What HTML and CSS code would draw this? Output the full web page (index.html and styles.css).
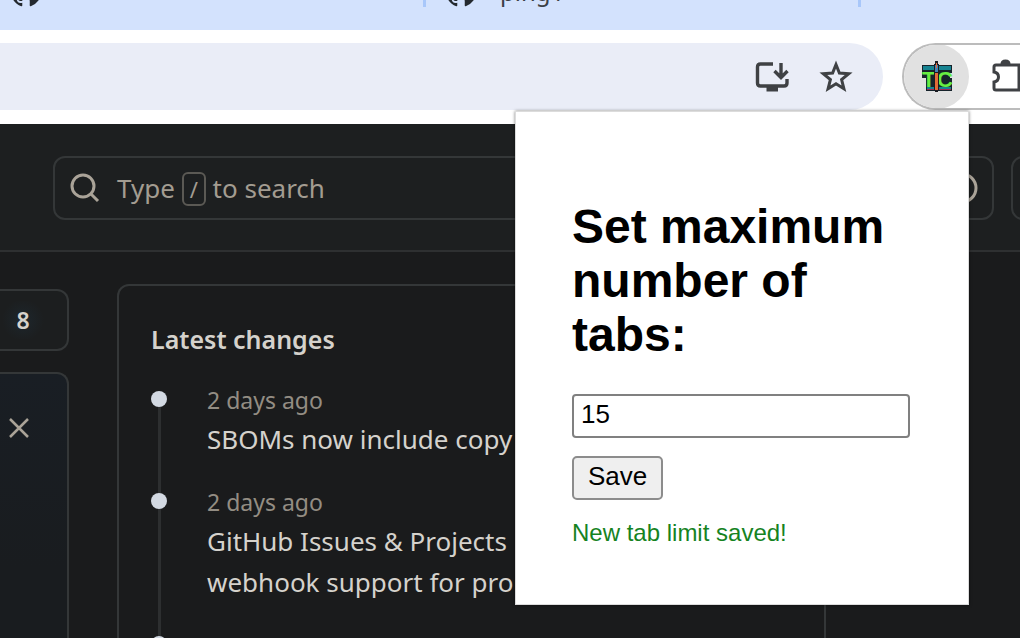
FILE: index.html
```html
<!DOCTYPE html>
<html lang="en">
<head>
    <meta charset="UTF-8">
    <meta name="viewport" content="width=device-width, initial-scale=1.0">
    <title>Tab limit</title>
    <link rel="stylesheet" href="styles.css">
</head>
<body>
    <svg hidden>
        <symbol id="github" viewBox="0 0 16 16">
            <path d="M8 0C3.58 0 0 3.58 0 8c0 3.54 2.29 6.53 5.47 7.59.4.07.55-.17.55-.38 0-.19-.01-.82-.01-1.49-2.01.37-2.53-.49-2.69-.94-.09-.23-.48-.94-.82-1.13-.28-.15-.68-.52-.01-.53.63-.01 1.08.58 1.23.82.72 1.21 1.87.87 2.33.66.07-.52.28-.87.51-1.07-1.78-.2-3.64-.89-3.64-3.95 0-.87.31-1.59.82-2.15-.08-.2-.36-1.02.08-2.12 0 0 .67-.21 2.2.82a7.6 7.6 0 0 1 4 0c1.53-1.04 2.2-.82 2.2-.82.44 1.1.16 1.92.08 2.12.51.56.82 1.27.82 2.15 0 3.07-1.87 3.75-3.65 3.95.29.25.54.73.54 1.48 0 1.07-.01 1.93-.01 2.2 0 .21.15.46.55.38A8 8 0 0 0 16 8c0-4.42-3.58-8-8-8z"/>
        </symbol>
    </svg>

    <div class="tab-strip">
        <div class="tab"><svg class="tab-icon"><use href="#github"/></svg></div>
        <div class="tab"><svg class="tab-icon"><use href="#github"/></svg><span class="tab-title">ping /</span></div>
        <div class="tab"></div>
    </div>

    <div class="toolbar">
        <div class="address-bar">
            <button class="icon-button" aria-label="Install app">
                <svg width="36" height="36" viewBox="0 0 36 36" fill="none" stroke="#3f4144" stroke-width="3.4">
                    <path d="M19 5H6.500Q3.500 5 3.500 8V24Q3.500 27 6.500 27H30Q33 27 33 24V20"/>
                    <path d="M27 4V18M20.500 12L27 18.500L33.500 12"/>
                    <path d="M12.500 30H24" stroke-width="5"/>
                </svg>
            </button>
            <button class="icon-button" aria-label="Bookmark this tab">
                <svg width="36" height="36" viewBox="0 0 36 36" fill="none" stroke="#3f4144" stroke-width="3">
                    <path d="M18 5.500L21.400 14.100L30.700 14.700L23.600 20.600L25.900 29.700L18 24.700L10.100 29.700L12.400 20.600L5.300 14.700L14.600 14.100Z"/>
                </svg>
            </button>
        </div>
        <div class="extensions">
            <button class="extension-active" aria-label="Tab limit extension">
                <svg width="32" height="32" viewBox="0 0 32 32">
                    <path fill="#16232b" d="M1 4H31V12H29V17H31V30H5V17H1Z"/>
                    <path fill="#168391" d="M2 5H30V9H2Z"/>
                    <path fill="#a32855" d="M6 28H30V29H6Z"/>
                    <path fill="#168391" d="M6 26H30V28H6Z"/>
                    <g class="extension-letters">
                        <text x="1" y="26">T</text>
                        <text x="16" y="26">C</text>
                    </g>
                    <path fill="#1c1c22" d="M13 3H14V0H17V3H18V29H17V31H14V29H13Z"/>
                    <path fill="#4382b5" d="M14 4H17V11H14Z"/>
                    <path fill="#e36b38" d="M14 12H17V29H14ZM15 2H16V7H15Z"/>
                </svg>
            </button>
            <button class="icon-button" aria-label="Extensions">
                <svg width="36" height="36" viewBox="0 0 36 36" fill="none" stroke="#3f4144" stroke-width="3">
                    <path d="M7 6H30V31H7Q5 31 5 29V23C11 22 11 14 5 13V8Q5 6 7 6Z"/>
                    <path d="M13 5C13 1 20 1 20 5Z" fill="#3f4144"/>
                </svg>
            </button>
        </div>
    </div>

    <header class="site-header">
        <label class="search">
            <svg class="search-icon" width="32" height="32" viewBox="0 0 32 32" fill="none" stroke="#aaa398" stroke-width="3">
                <circle cx="14" cy="14" r="11"/>
                <path d="M22 22L29 29"/>
            </svg>
            <span class="search-hint">Type <kbd>/</kbd> to search</span>
            <input class="search-input" type="text" aria-label="Search">
        </label>
        <button class="header-button" aria-label="Issues">
            <svg width="36" height="36" viewBox="0 0 36 36" fill="none" stroke="#aaa398" stroke-width="3"><circle cx="18" cy="18" r="14"/></svg>
        </button>
        <button class="header-button" aria-label="Pull requests"></button>
    </header>

    <main class="content">
        <aside class="sidebar">
            <div class="panel stars"><span class="counter">8</span></div>
            <div class="panel promo">
                <button class="close" aria-label="Close">
                    <svg width="20" height="20" viewBox="0 0 20 20" stroke="#aaa398" stroke-width="2.5"><path d="M1 1L19 19M19 1L1 19"/></svg>
                </button>
            </div>
        </aside>
        <section class="changes">
            <h2 class="changes-title">Latest changes</h2>
            <ul class="timeline">
                <li class="timeline-item">
                    <div class="time">2 days ago</div>
                    <a class="entry" href="#">SBOMs now include copy</a>
                </li>
                <li class="timeline-item">
                    <div class="time">2 days ago</div>
                    <a class="entry" href="#">GitHub Issues &amp; Projects<br>webhook support for pro</a>
                </li>
                <li class="timeline-item"></li>
            </ul>
        </section>
    </main>

    <form class="popup">
        <h1 class="popup-title"><label for="limit">Set maximum number of tabs:</label></h1>
        <input class="limit" id="limit" type="text" inputmode="numeric" value="15">
        <button class="save" type="button">Save</button>
        <p class="status">New tab limit saved!</p>
    </form>
</body>
</html>
```
FILE: styles.css
```css
:root {
    --page: #1a1b1c;
    --header: #1d1f20;
    --line: #343738;
    --muted: #a39c91;
    --text: #d5d2cc;
}

* {
    box-sizing: border-box;
}

body {
    margin: 0;
    height: 100vh;
    overflow: hidden;
    position: relative;
    display: flex;
    flex-direction: column;
    background: var(--page);
    color: var(--text);
    font-family: "Noto Sans", "Open Sans", sans-serif;
}

button {
    padding: 0;
    border: 0;
    background: none;
    font: inherit;
    color: inherit;
}

svg {
    display: block;
    flex: none;
}

svg[hidden] {
    display: none;
}

/* Browser chrome */
.tab-strip {
    flex: none;
    height: 30px;
    display: flex;
    align-items: flex-end;
    overflow: hidden;
    background: #d3e2fd;
}

.tab {
    flex: none;
    width: 435px;
    height: 54px;
    padding-left: 20px;
    margin-bottom: 23px;
    display: flex;
    align-items: flex-end;
    gap: 24px;
    border-right: 3px solid #a8c7fa;
}

.tab:first-child {
    width: 426px;
    padding-left: 11px;
}

.tab-icon {
    width: 30px;
    height: 30px;
    fill: #24292f;
}

.tab-title {
    font-size: 24px;
    line-height: 30px;
    color: #3b4046;
}

.toolbar {
    flex: none;
    display: flex;
    gap: 19px;
    padding: 13px 0 14px;
    background: #fff;
}

.address-bar {
    flex: 1;
    height: 67px;
    padding-right: 29px;
    display: flex;
    align-items: center;
    justify-content: flex-end;
    gap: 28px;
    border-radius: 0 34px 34px 0;
    background: #eaedf7;
}

.extensions {
    width: 118px;
    height: 67px;
    display: flex;
    align-items: center;
    gap: 20px;
    border: 2px solid #bcbcbc;
    border-right: 0;
    border-radius: 34px 0 0 34px;
    overflow: hidden;
}

.extension-active {
    flex: none;
    width: 65px;
    height: 65px;
    display: flex;
    align-items: center;
    justify-content: center;
    border-radius: 50%;
    background: #e1e1e1;
}

.extension-letters {
    fill: #67ed42;
    font-family: "Liberation Sans", sans-serif;
    font-size: 22px;
    font-weight: bold;
}

/* GitHub page */
.site-header {
    flex: none;
    height: 128px;
    padding: 2px 0 0 53px;
    display: flex;
    align-items: center;
    gap: 17px;
    overflow: hidden;
    border-bottom: 2px solid #2e3031;
    background: var(--header);
}

.search {
    flex: 1;
    height: 64px;
    padding: 0 14px;
    display: flex;
    align-items: center;
    gap: 16px;
    border: 2px solid var(--line);
    border-radius: 12px;
}

.search-hint {
    font-size: 26px;
    line-height: 40px;
    color: var(--muted);
    white-space: nowrap;
}

.search-hint kbd {
    padding: 0 6px;
    border: 2px solid #5b5954;
    border-radius: 6px;
    font-family: inherit;
    font-size: 22px;
}

.search-input {
    flex: 1;
    min-width: 0;
    border: 0;
    background: none;
    color: inherit;
    font: inherit;
}

.header-button {
    flex: none;
    width: 64px;
    height: 64px;
    display: flex;
    align-items: center;
    justify-content: center;
    border: 2px solid var(--line);
    border-radius: 12px;
}

.header-button:last-child {
    margin-right: -55px;
}

.content {
    flex: 1;
    min-height: 0;
    display: grid;
    grid-template-columns: 69px 1fr;
    gap: 48px;
    padding: 32px 194px 0 0;
    overflow: hidden;
}

.sidebar {
    padding-top: 5px;
    display: flex;
    flex-direction: column;
    gap: 21px;
}

.panel {
    border: 2px solid var(--line);
    border-left: 0;
    border-radius: 0 12px 12px 0;
}

.stars {
    height: 62px;
    display: flex;
    align-items: center;
    background: #1c1e1f;
}

.counter {
    width: 46px;
    padding: 4px 0;
    background: radial-gradient(circle, #1d262c, #1c1e1f 70%);
    text-align: center;
    font-size: 23px;
    line-height: 30px;
    font-weight: 600;
}

.promo {
    flex: 1;
    padding: 44px 0 0 9px;
    border-bottom: 0;
    border-radius: 0 12px 0 0;
    background: linear-gradient(#191e24, #191c1f 70%);
}

.changes {
    padding: 32px 32px 0;
    border: 2px solid var(--line);
    border-bottom: 0;
    border-radius: 12px 12px 0 0;
}

.changes-title {
    margin: 0 0 22px;
    font-size: 25px;
    line-height: 42px;
    font-weight: 600;
}

.timeline {
    margin: 0;
    padding: 0;
    list-style: none;
}

.timeline-item {
    position: relative;
    padding: 0 0 24px 56px;
}

.timeline-item::before {
    content: "";
    position: absolute;
    left: 7px;
    top: 16px;
    width: 3px;
    height: 100%;
    background: #2d2f30;
}

.timeline-item::after {
    content: "";
    position: absolute;
    left: 0;
    top: 9px;
    width: 16px;
    height: 16px;
    border-radius: 50%;
    background: #d3d9e2;
}

.time {
    font-size: 23px;
    line-height: 37px;
    color: #938d83;
}

.entry {
    display: block;
    font-size: 26px;
    line-height: 41px;
    color: inherit;
    text-decoration: none;
    white-space: nowrap;
}

/* Extension popup */
.popup {
    position: absolute;
    top: 111px;
    right: 51px;
    width: 454px;
    padding: 88px 58px 55px 56px;
    border: 1px solid #dcdcdc;
    background: #fff;
    color: #000;
    font-family: "Liberation Sans", Arial, sans-serif;
    box-shadow: 0 0 3px rgba(0, 0, 0, 0.5);
}

.popup-title {
    margin: 0 0 32px;
    font-size: 48px;
    line-height: 54px;
}

.limit {
    display: block;
    width: 100%;
    height: 44px;
    margin-bottom: 18px;
    padding: 0 7px 4px;
    border: 2px solid #808080;
    border-radius: 4px;
    font-family: inherit;
    font-size: 26px;
}

.save {
    display: block;
    height: 44px;
    padding: 0 14px 4px;
    border: 2px solid #8c8c8c;
    border-radius: 5px;
    background: #efefef;
    font-size: 26px;
}

.status {
    margin: 17px 0 0;
    font-size: 24px;
    line-height: 32px;
    color: #16831f;
}
```
